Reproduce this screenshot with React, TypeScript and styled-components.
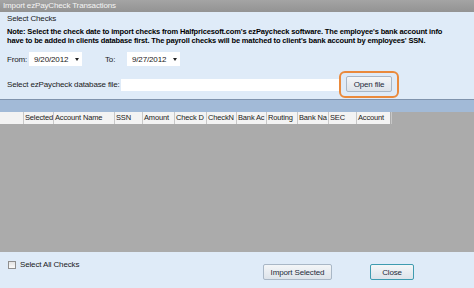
import styled, { createGlobalStyle } from 'styled-components';

const GlobalStyle = createGlobalStyle`
  html, body {
    margin: 0;
    padding: 0;
    background: #ffffff;
  }
  body {
    font-family: 'Liberation Sans', Arial, sans-serif;
    letter-spacing: -0.15px;
  }
`;

const Window = styled.div`
  width: 474px;
  height: 288px;
  display: flex;
  flex-direction: column;
  background: #dfebf8;
  overflow: hidden;
`;

const TitleBar = styled.div`
  height: 12px;
  flex: none;
  background: linear-gradient(#a4a4a4, #939393);
  color: #f4f4f4;
  font-size: 8px;
  line-height: 12px;
  padding-left: 3px;
`;

const Top = styled.div`
  padding: 2px 7px 0 7px;
  height: 87px;
  box-sizing: border-box;
  flex: none;
  display: flex;
  flex-direction: column;
  font-size: 8px;
  color: #1a1a1a;
`;

const Note = styled.div`
  margin-top: 4px;
  font-weight: bold;
  font-size: 7.5px;
  line-height: 9px;
  color: #000;
  white-space: nowrap;
`;

const DateRow = styled.div`
  display: flex;
  align-items: center;
  margin-top: 7px;
  height: 14px;
`;

const Label = styled.span<{ $w?: number }>`
  width: ${(p) => (p.$w ? `${p.$w}px` : 'auto')};
  flex: none;
  white-space: nowrap;
`;

const DateBox = styled.div`
  width: 53px;
  height: 14px;
  background: #ffffff;
  display: flex;
  align-items: center;
  justify-content: space-between;
  padding: 0 3px 0 5px;
  box-sizing: border-box;
  font-size: 8px;
`;

const Arrow = styled.span`
  width: 0;
  height: 0;
  border-left: 2.5px solid transparent;
  border-right: 2.5px solid transparent;
  border-top: 3px solid #222;
`;

const FileRow = styled.div`
  display: flex;
  align-items: center;
  margin-top: 5px;
  height: 26px;
`;

const FileInput = styled.div`
  width: 218px;
  height: 12px;
  background: #ffffff;
  margin-left: 7px;
  margin-top: 2px;
`;

const Highlight = styled.div`
  width: 60px;
  height: 27px;
  border: 2px solid #ea8a3c;
  border-radius: 6px;
  box-sizing: border-box;
  display: flex;
  align-items: center;
  justify-content: center;
`;

const Button = styled.div<{ $w: number; $focus?: boolean }>`
  width: ${(p) => p.$w}px;
  height: 16px;
  box-sizing: border-box;
  border: 1px solid ${(p) => (p.$focus ? '#3f9bb0' : '#a9b7c6')};
  border-radius: 2px;
  background: linear-gradient(#f4f6f8, #dde3ea);
  font-size: 8px;
  display: flex;
  align-items: center;
  justify-content: center;
  color: #1d2a3a;
`;

const Band = styled.div`
  height: 13px;
  flex: none;
  box-sizing: border-box;
  border-top: 1px solid #7f93ad;
  background: #a2bad7;
`;

const Grid = styled.div`
  flex: 1;
  background: #ababab;
  display: flex;
  flex-direction: column;
`;

const HeaderRow = styled.div`
  display: flex;
  height: 12px;
  width: 390px;
  background: #f3f3f3;
  font-size: 7.5px;
  line-height: 12px;
  color: #1a1a1a;
`;

const HeaderCell = styled.div<{ $w: number }>`
  width: ${(p) => p.$w}px;
  flex: none;
  box-sizing: border-box;
  border-right: 1px solid #c8c8c8;
  padding-left: 1px;
  white-space: nowrap;
  overflow: hidden;
`;

const Bottom = styled.div`
  height: 36px;
  flex: none;
  box-sizing: border-box;
  display: flex;
  align-items: flex-start;
  padding: 8px 0 0 8px;
  font-size: 8px;
  color: #1a1a1a;
`;

const CheckLabel = styled.label`
  display: flex;
  align-items: center;
  gap: 4px;
  width: 255px;
`;

const Box = styled.span`
  width: 8px;
  height: 8px;
  border: 1px solid #8f8f8f;
  background: linear-gradient(#e4e4e4, #fafafa);
  box-sizing: border-box;
`;

const BottomButtons = styled.div`
  display: flex;
  gap: 38px;
  margin-top: 4px;
`;

const columns: [string, number][] = [
  ['', 24],
  ['Selected', 30],
  ['Account Name', 61],
  ['SSN', 28],
  ['Amount', 32],
  ['Check D', 32],
  ['CheckN', 30],
  ['Bank Ac', 30],
  ['Routing', 31],
  ['Bank Na', 31],
  ['SEC', 28],
  ['Account', 35],
];

export default function App() {
  return (
    <>
      <GlobalStyle />
      <Window>
        <TitleBar>Import ezPayCheck Transactions</TitleBar>
        <Top>
          <div>Select Checks</div>
          <Note>
            Note: Select the check date to import checks from Halfpricesoft.com's ezPaycheck software. The employee's bank account info
            <br />
            have to be added in clients database first. The payroll checks will be matched to client's bank account by employees' SSN.
          </Note>
          <DateRow>
            <Label $w={22}>From:</Label>
            <DateBox>
              9/20/2012 <Arrow />
            </DateBox>
            <Label $w={22} style={{ marginLeft: 23 }}>
              To:
            </Label>
            <DateBox>
              9/27/2012 <Arrow />
            </DateBox>
          </DateRow>
          <FileRow>
            <Label $w={107}>Select ezPaycheck database file:</Label>
            <FileInput />
            <Highlight>
              <Button $w={46}>Open file</Button>
            </Highlight>
          </FileRow>
        </Top>
        <Band />
        <Grid>
          <HeaderRow>
            {columns.map(([name, w], i) => (
              <HeaderCell key={i} $w={w}>
                {name}
              </HeaderCell>
            ))}
          </HeaderRow>
        </Grid>
        <Bottom>
          <CheckLabel>
            <Box />
            Select All Checks
          </CheckLabel>
          <BottomButtons>
            <Button $w={69}>Import Selected</Button>
            <Button $w={44} $focus>
              Close
            </Button>
          </BottomButtons>
        </Bottom>
      </Window>
    </>
  );
}
